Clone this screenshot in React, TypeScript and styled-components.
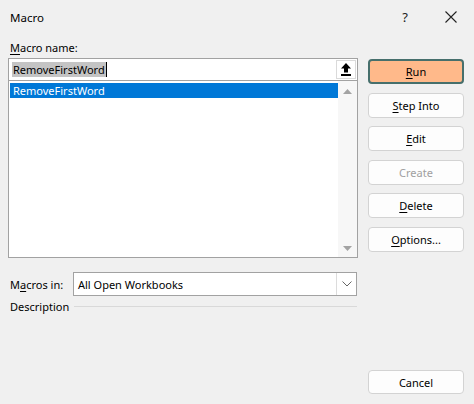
import styled, { createGlobalStyle } from "styled-components";

const GlobalStyle = createGlobalStyle`
  html, body {
    margin: 0;
    padding: 0;
    background: #f0f0f0;
  }
  body {
    font-family: "Noto Sans", "Open Sans", Arial, sans-serif;
    font-size: 11px;
    color: #000;
  }
`;

const Window = styled.div`
  width: 474px;
  height: 404px;
  background: #f0f0f0;
  display: flex;
  flex-direction: column;
  box-sizing: border-box;
  overflow: hidden;
`;

const TitleBar = styled.div`
  height: 34px;
  flex: none;
  display: flex;
  align-items: center;
  padding-left: 10px;
`;

const Title = styled.div`
  font-size: 11.5px;
  flex: 1;
`;

const TitleButton = styled.div`
  width: 46px;
  height: 34px;
  display: flex;
  align-items: center;
  justify-content: center;
  font-size: 13px;
  color: #222;
`;

const Body = styled.div`
  flex: 1;
  display: grid;
  grid-template-columns: 350px 96px;
  column-gap: 10px;
  padding: 0 10px 10px 8px;
  min-height: 0;
`;

const LeftColumn = styled.div`
  display: flex;
  flex-direction: column;
`;

const FieldLabel = styled.div`
  line-height: 16px;
  padding-left: 2px;
  margin-top: 6px;
`;

const NameField = styled.div`
  margin-top: 2px;
  height: 21px;
  border: 1px solid #a2a2a2;
  background: #fff;
  display: flex;
  align-items: center;
  padding-left: 3px;
`;

const SelectedText = styled.span`
  background: #c4c4c4;
  line-height: 15px;
  padding: 0 1px;
`;

const Caret = styled.span`
  width: 1px;
  height: 15px;
  background: #000;
`;

const UploadButton = styled.div`
  margin-left: auto;
  margin-right: 1px;
  width: 20px;
  height: 19px;
  border: 1px solid #dadada;
  background: #fff;
  display: flex;
  align-items: center;
  justify-content: center;
  box-sizing: border-box;
`;

const ListBox = styled.div`
  height: 177px;
  box-sizing: border-box;
  border: 1px solid #a2a2a2;
  border-top: none;
  background: #fff;
  display: flex;
`;

const ListItems = styled.div`
  flex: 1;
  padding: 2px 0 0 1px;
`;

const ListItem = styled.div<{ $selected?: boolean }>`
  height: 15px;
  line-height: 15px;
  padding-left: 3px;
  background: ${(p) => (p.$selected ? "#0078d7" : "transparent")};
  color: ${(p) => (p.$selected ? "#fff" : "#000")};
`;

const ScrollBar = styled.div`
  width: 19px;
  background: #f7f7f7;
  display: flex;
  flex-direction: column;
  justify-content: space-between;
  align-items: center;
  padding: 8px 0 6px;
`;

const ComboRow = styled.div`
  margin-top: 14px;
  display: flex;
  align-items: center;
`;

const ComboLabel = styled.div`
  width: 63px;
  padding-left: 2px;
`;

const Combo = styled.div`
  flex: 1;
  height: 24px;
  box-sizing: border-box;
  border: 1px solid #a2a2a2;
  background: #fff;
  display: flex;
  align-items: center;
  padding-left: 4px;
  margin-right: 1px;
`;

const ComboArrow = styled.div`
  margin-left: auto;
  width: 19px;
  align-self: stretch;
  border-left: 1px solid #dcdcdc;
  display: flex;
  align-items: center;
  justify-content: center;
`;

const DescriptionRow = styled.div`
  margin-top: 3px;
  display: flex;
  align-items: center;
  gap: 5px;
  padding-left: 2px;
  margin-right: 1px;
`;

const Rule = styled.div`
  flex: 1;
  height: 1px;
  background: #d9d9d9;
`;

const RightColumn = styled.div`
  display: flex;
  flex-direction: column;
  gap: 8.5px;
  padding-top: 25px;
`;

const Button = styled.div<{ $primary?: boolean; $disabled?: boolean }>`
  height: 25px;
  box-sizing: border-box;
  border-radius: 4px;
  border: ${(p) => (p.$primary ? "2px solid #466f6c" : "1px solid #d3d3d3")};
  background: ${(p) => (p.$primary ? "#ffb98a" : "#fdfdfd")};
  color: ${(p) => (p.$disabled ? "#a0a0a0" : "#000")};
  display: flex;
  align-items: center;
  justify-content: center;
  &:last-child {
    margin-top: auto;
    height: 24px;
  }
`;

const Key = styled.span`
  text-decoration: underline;
  text-underline-offset: 1.5px;
`;

function CloseIcon() {
  return (
    <svg width="12" height="12" viewBox="0 0 12 12">
      <path d="M0.5 0.5 L11.5 11.5 M11.5 0.5 L0.5 11.5" stroke="#222" strokeWidth="1.1" />
    </svg>
  );
}

function UploadIcon() {
  return (
    <svg width="10" height="13" viewBox="0 0 10 13">
      <path d="M5 0 L10 5.5 H7 V9.5 H3 V5.5 H0 Z" fill="#000" />
      <rect x="0" y="11" width="10" height="2" fill="#000" />
    </svg>
  );
}

function Triangle({ down }: { down?: boolean }) {
  return (
    <svg width="9" height="5" viewBox="0 0 9 5">
      <path d={down ? "M0 0 H9 L4.5 5 Z" : "M0 5 H9 L4.5 0 Z"} fill="#a3a3a3" />
    </svg>
  );
}

function Chevron() {
  return (
    <svg width="10" height="6" viewBox="0 0 10 6">
      <path d="M0.5 0.5 L5 5 L9.5 0.5" stroke="#666" strokeWidth="1" fill="none" />
    </svg>
  );
}

export default function App() {
  return (
    <>
      <GlobalStyle />
      <Window>
        <TitleBar>
          <Title>Macro</Title>
          <TitleButton>?</TitleButton>
          <TitleButton>
            <CloseIcon />
          </TitleButton>
        </TitleBar>
        <Body>
          <LeftColumn>
            <FieldLabel>
              <Key>M</Key>acro name:
            </FieldLabel>
            <NameField>
              <SelectedText>RemoveFirstWord</SelectedText>
              <Caret />
              <UploadButton>
                <UploadIcon />
              </UploadButton>
            </NameField>
            <ListBox>
              <ListItems>
                <ListItem $selected>RemoveFirstWord</ListItem>
              </ListItems>
              <ScrollBar>
                <Triangle />
                <Triangle down />
              </ScrollBar>
            </ListBox>
            <ComboRow>
              <ComboLabel>
                M<Key>a</Key>cros in:
              </ComboLabel>
              <Combo>
                All Open Workbooks
                <ComboArrow>
                  <Chevron />
                </ComboArrow>
              </Combo>
            </ComboRow>
            <DescriptionRow>
              Description
              <Rule />
            </DescriptionRow>
          </LeftColumn>
          <RightColumn>
            <Button $primary>
              <Key>R</Key>un
            </Button>
            <Button>
              <Key>S</Key>tep Into
            </Button>
            <Button>
              <Key>E</Key>dit
            </Button>
            <Button $disabled>Create</Button>
            <Button>
              <Key>D</Key>elete
            </Button>
            <Button>
              <Key>O</Key>ptions...
            </Button>
            <Button>Cancel</Button>
          </RightColumn>
        </Body>
      </Window>
    </>
  );
}
